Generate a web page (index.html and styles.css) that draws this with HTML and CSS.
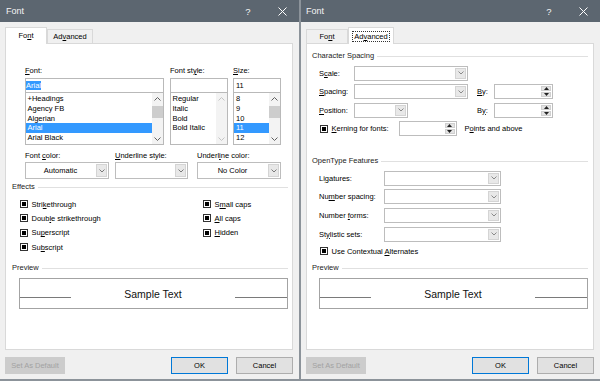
FILE: index.html
```html
<!DOCTYPE html>
<html>
<head>
<meta charset="utf-8">
<title>Font</title>
<link rel="stylesheet" href="styles.css">
</head>
<body>
<div class="screen">
  <section class="dialog dialog-left">
    <div class="titlebar">
      <span class="title">Font</span>
      <span class="help">?</span>
      <span class="close"><svg width="9" height="9" viewBox="0 0 9 9"><path d="M0.5 0.5L8.5 8.5M8.5 0.5L0.5 8.5" stroke="#fff" stroke-width="1"/></svg></span>
    </div>
    <div class="tabs">
      <div class="tab tab-font selected">Fo<u>n</u>t</div>
      <div class="tab tab-adv">Ad<u>v</u>anced</div>
    </div>
    <div class="panel panel-font">
      <div class="pickers">
        <div class="pick pick-font">
          <div class="lbl"><u>F</u>ont:</div>
          <div class="input"><span class="hl">Arial</span></div>
          <div class="list">
            <div class="items">
              <div class="it">+Headings</div>
              <div class="it">Agency FB</div>
              <div class="it">Algerian</div>
              <div class="it sel">Arial</div>
              <div class="it">Arial Black</div>
            </div>
            <div class="sbar">
              <span class="sarr"><svg width="7" height="4" viewBox="0 0 7 4"><polyline points="0.5,3.5 3.5,0.5 6.5,3.5" fill="none" stroke="#606060"/></svg></span>
              <span class="thumb"></span>
              <span class="sarr dn"><svg width="7" height="4" viewBox="0 0 7 4"><polyline points="0.5,0.5 3.5,3.5 6.5,0.5" fill="none" stroke="#606060"/></svg></span>
            </div>
          </div>
        </div>
        <div class="pick pick-style">
          <div class="lbl">Font st<u>y</u>le:</div>
          <div class="input"></div>
          <div class="list">
            <div class="items">
              <div class="it">Regular</div>
              <div class="it">Italic</div>
              <div class="it">Bold</div>
              <div class="it">Bold Italic</div>
            </div>
            <div class="sbar sbar-off">
              <span class="sarr"><svg width="7" height="4" viewBox="0 0 7 4"><polyline points="0.5,3.5 3.5,0.5 6.5,3.5" fill="none" stroke="#c4c4c4"/></svg></span>
              <span class="sarr dn"><svg width="7" height="4" viewBox="0 0 7 4"><polyline points="0.5,0.5 3.5,3.5 6.5,0.5" fill="none" stroke="#c4c4c4"/></svg></span>
            </div>
          </div>
        </div>
        <div class="pick pick-size">
          <div class="lbl"><u>S</u>ize:</div>
          <div class="input input-size">11</div>
          <div class="list">
            <div class="items items-size">
              <div class="it">8</div>
              <div class="it">9</div>
              <div class="it">10</div>
              <div class="it sel">11</div>
              <div class="it">12</div>
            </div>
            <div class="sbar">
              <span class="sarr"><svg width="7" height="4" viewBox="0 0 7 4"><polyline points="0.5,3.5 3.5,0.5 6.5,3.5" fill="none" stroke="#606060"/></svg></span>
              <span class="thumb"></span>
              <span class="sarr dn"><svg width="7" height="4" viewBox="0 0 7 4"><polyline points="0.5,0.5 3.5,3.5 6.5,0.5" fill="none" stroke="#606060"/></svg></span>
            </div>
          </div>
        </div>
      </div>

      <div class="colors">
        <div class="cfield f-fc">
          <div class="clbl">Font <u>c</u>olor:</div>
          <div class="combo"><span class="val">Automatic</span><span class="arr"><svg width="6" height="4" viewBox="0 0 6 4"><polyline points="0.5,0.5 3,3 5.5,0.5" fill="none" stroke="#7a7a7a"/></svg></span></div>
        </div>
        <div class="cfield f-us">
          <div class="clbl"><u>U</u>nderline style:</div>
          <div class="combo"><span class="val"></span><span class="arr"><svg width="6" height="4" viewBox="0 0 6 4"><polyline points="0.5,0.5 3,3 5.5,0.5" fill="none" stroke="#7a7a7a"/></svg></span></div>
        </div>
        <div class="cfield f-uc">
          <div class="clbl">Underl<u>i</u>ne color:</div>
          <div class="combo"><span class="val">No Color</span><span class="arr"><svg width="6" height="4" viewBox="0 0 6 4"><polyline points="0.5,0.5 3,3 5.5,0.5" fill="none" stroke="#7a7a7a"/></svg></span></div>
        </div>
      </div>

      <div class="group g-effects">
        <div class="legend"><span>Effects</span></div>
        <div class="effects">
          <div class="eff-col col1">
            <div class="cb"><span class="box"></span><span>Stri<u>k</u>ethrough</span></div>
            <div class="cb"><span class="box"></span><span>Doub<u>l</u>e strikethrough</span></div>
            <div class="cb"><span class="box"></span><span>Su<u>p</u>erscript</span></div>
            <div class="cb"><span class="box"></span><span>Su<u>b</u>script</span></div>
          </div>
          <div class="eff-col col2">
            <div class="cb"><span class="box"></span><span>S<u>m</u>all caps</span></div>
            <div class="cb"><span class="box"></span><span><u>A</u>ll caps</span></div>
            <div class="cb"><span class="box"></span><span><u>H</u>idden</span></div>
          </div>
        </div>
      </div>

      <div class="group g-preview">
        <div class="legend"><span>Preview</span></div>
        <div class="pbox">
          <span class="pline pl-left"></span>
          <span class="ptext">Sample Text</span>
          <span class="pline pl-right"></span>
        </div>
      </div>
    </div>
    <div class="buttons">
      <div class="btn btn-default">Set As Default</div>
      <div class="btn btn-ok">OK</div>
      <div class="btn btn-cancel">Cancel</div>
    </div>
  </section>

  <section class="dialog dialog-right">
    <div class="titlebar">
      <span class="title">Font</span>
      <span class="help">?</span>
      <span class="close"><svg width="9" height="9" viewBox="0 0 9 9"><path d="M0.5 0.5L8.5 8.5M8.5 0.5L0.5 8.5" stroke="#fff" stroke-width="1"/></svg></span>
    </div>
    <div class="tabs">
      <div class="tab tab-font">Fo<u>n</u>t</div>
      <div class="tab tab-adv selected"><span class="focus">Ad<u>v</u>anced</span></div>
    </div>
    <div class="panel panel-adv">
      <div class="group g-cs">
        <div class="legend"><span>Character Spacing</span></div>
        <div class="rows">
          <div class="row">
            <span class="rlbl">S<u>c</u>ale:</span>
            <span class="cell"><span class="combo c-full"><span class="val"></span><span class="arr"><svg width="6" height="4" viewBox="0 0 6 4"><polyline points="0.5,0.5 3,3 5.5,0.5" fill="none" stroke="#8a8a8a"/></svg></span></span></span>
          </div>
          <div class="row">
            <span class="rlbl"><u>S</u>pacing:</span>
            <span class="cell"><span class="combo c-full"><span class="val"></span><span class="arr"><svg width="6" height="4" viewBox="0 0 6 4"><polyline points="0.5,0.5 3,3 5.5,0.5" fill="none" stroke="#8a8a8a"/></svg></span></span></span>
            <span class="by"><u>B</u>y:</span>
            <span class="spin s-by"><span class="spin-btns"><span class="sb"><svg width="5" height="3" viewBox="0 0 5 3"><polygon points="0,3 2.5,0 5,3" fill="#222"/></svg></span><span class="sb"><svg width="5" height="3" viewBox="0 0 5 3"><polygon points="0,0 2.5,3 5,0" fill="#222"/></svg></span></span></span>
          </div>
          <div class="row">
            <span class="rlbl"><u>P</u>osition:</span>
            <span class="cell"><span class="combo c-pos"><span class="val"></span><span class="arr"><svg width="6" height="4" viewBox="0 0 6 4"><polyline points="0.5,0.5 3,3 5.5,0.5" fill="none" stroke="#8a8a8a"/></svg></span></span></span>
            <span class="by">B<u>y</u>:</span>
            <span class="spin s-by"><span class="spin-btns"><span class="sb"><svg width="5" height="3" viewBox="0 0 5 3"><polygon points="0,3 2.5,0 5,3" fill="#222"/></svg></span><span class="sb"><svg width="5" height="3" viewBox="0 0 5 3"><polygon points="0,0 2.5,3 5,0" fill="#222"/></svg></span></span></span>
          </div>
          <div class="row">
            <span class="cb cb-inline"><span class="box"></span><span class="klbl"><u>K</u>erning for fonts:</span></span>
            <span class="spin s-kern"><span class="spin-btns"><span class="sb"><svg width="5" height="3" viewBox="0 0 5 3"><polygon points="0,3 2.5,0 5,3" fill="#222"/></svg></span><span class="sb"><svg width="5" height="3" viewBox="0 0 5 3"><polygon points="0,0 2.5,3 5,0" fill="#222"/></svg></span></span></span>
            <span class="pts">P<u>o</u>ints and above</span>
          </div>
        </div>
      </div>

      <div class="group g-ot">
        <div class="legend"><span>OpenType Features</span></div>
        <div class="rows">
          <div class="row">
            <span class="rlbl rlbl-ot">Li<u>g</u>atures:</span>
            <span class="combo c-ot"><span class="val"></span><span class="arr"><svg width="6" height="4" viewBox="0 0 6 4"><polyline points="0.5,0.5 3,3 5.5,0.5" fill="none" stroke="#8a8a8a"/></svg></span></span>
          </div>
          <div class="row">
            <span class="rlbl rlbl-ot">Nu<u>m</u>ber spacing:</span>
            <span class="combo c-ot"><span class="val"></span><span class="arr"><svg width="6" height="4" viewBox="0 0 6 4"><polyline points="0.5,0.5 3,3 5.5,0.5" fill="none" stroke="#8a8a8a"/></svg></span></span>
          </div>
          <div class="row">
            <span class="rlbl rlbl-ot">Number <u>f</u>orms:</span>
            <span class="combo c-ot"><span class="val"></span><span class="arr"><svg width="6" height="4" viewBox="0 0 6 4"><polyline points="0.5,0.5 3,3 5.5,0.5" fill="none" stroke="#8a8a8a"/></svg></span></span>
          </div>
          <div class="row">
            <span class="rlbl rlbl-ot">St<u>y</u>listic sets:</span>
            <span class="combo c-ot"><span class="val"></span><span class="arr"><svg width="6" height="4" viewBox="0 0 6 4"><polyline points="0.5,0.5 3,3 5.5,0.5" fill="none" stroke="#8a8a8a"/></svg></span></span>
          </div>
          <div class="cb cb-ctx"><span class="box"></span><span>Use Contextual <u>A</u>lternates</span></div>
        </div>
      </div>

      <div class="group g-preview g-preview-adv">
        <div class="legend"><span>Preview</span></div>
        <div class="pbox">
          <span class="pline pl-left"></span>
          <span class="ptext">Sample Text</span>
          <span class="pline pl-right"></span>
        </div>
      </div>
    </div>
    <div class="buttons">
      <div class="btn btn-default">Set As Default</div>
      <div class="btn btn-ok">OK</div>
      <div class="btn btn-cancel">Cancel</div>
    </div>
  </section>
</div>
</body>
</html>
```

FILE: styles.css
```css
html, body {
  margin: 0;
  padding: 0;
}
body {
  font-family: "Liberation Sans", Arial, sans-serif;
  font-size: 7.5px;
  color: #000;
  background: #f0f0f0;
}
u {
  text-decoration: underline;
  text-underline-offset: 1px;
}
.screen {
  display: flex;
  width: 600px;
  height: 381px;
  overflow: hidden;
  background: #f0f0f0;
}
.dialog {
  width: 300px;
  height: 381px;
  box-sizing: border-box;
  background: #f0f0f0;
  border-bottom: 2px solid #8c939a;
  display: flex;
  flex-direction: column;
  flex: none;
}
.dialog-left {
  border-right: 1px solid #8c939a;
}
.dialog-right {
  border-left: 1px solid #8c939a;
}

/* title bar */
.titlebar {
  height: 22px;
  flex: none;
  background: #5c6670;
  color: #f4f4f4;
  display: flex;
  align-items: center;
}
.title {
  padding-left: 6px;
  font-size: 9px;
}
.dialog-right .title {
  padding-left: 5px;
}
.help {
  margin-left: auto;
  width: 30px;
  text-align: center;
  font-size: 9.5px;
}
.close {
  width: 30px;
  margin-left: 4px;
  margin-right: 2px;
  display: flex;
  justify-content: center;
}

/* tabs */
.tabs {
  height: 21px;
  flex: none;
  display: flex;
  align-items: flex-end;
  padding-left: 5px;
}
.tab {
  box-sizing: border-box;
  height: 14px;
  border: 1px solid #d9d9d9;
  border-bottom: none;
  background: #f0f0f0;
  text-align: center;
  line-height: 13px;
  color: #000;
}
.tab-font {
  width: 42px;
}
.tab-adv {
  width: 46px;
}
.tab.selected {
  height: 17px;
  background: #fff;
  margin-bottom: -1px;
  position: relative;
  z-index: 1;
  line-height: 16px;
}
.tab-adv.selected {
  display: flex;
  align-items: center;
  justify-content: center;
}
.focus {
  display: block;
  line-height: 9px;
  padding: 0 1px;
  border: 1px dotted #333;
}

/* panel */
.panel {
  width: 288px;
  height: 307px;
  flex: none;
  box-sizing: border-box;
  margin-left: 5px;
  border: 1px solid #d9d9d9;
  background: #fff;
}

/* font pickers */
.pickers {
  display: flex;
  padding: 22px 0 0 19px;
}
.pick-font {
  width: 139px;
}
.pick-style {
  width: 58px;
  margin-left: 6px;
}
.pick-size {
  width: 48px;
  margin-left: 5px;
}
.lbl {
  height: 10px;
  line-height: 10px;
  margin-bottom: 2px;
  white-space: nowrap;
}
.input {
  height: 15px;
  box-sizing: border-box;
  border: 1px solid #b9b9b9;
  line-height: 13px;
  padding-left: 0;
  background: #fff;
}
.input-size {
  padding-left: 2px;
}
.hl {
  background: #3399ff;
  color: #fff;
}
.list {
  height: 52px;
  box-sizing: border-box;
  border: 1px solid #b9b9b9;
  border-top: none;
  display: flex;
  background: #fff;
}
.items {
  flex: 1;
  padding-top: 1px;
  overflow: hidden;
}
.it {
  height: 9.8px;
  line-height: 9.8px;
  padding-left: 1.5px;
  white-space: nowrap;
}
.items-size .it {
  padding-left: 2px;
}
.it.sel {
  background: #3399ff;
  color: #fff;
}
.sbar {
  width: 11px;
  flex: none;
  background: #f3f3f3;
  display: flex;
  flex-direction: column;
  align-items: center;
}
.sarr {
  height: 11px;
  width: 11px;
  display: flex;
  align-items: center;
  justify-content: center;
}
.sarr.dn {
  margin-top: auto;
}
.thumb {
  width: 11px;
  height: 12px;
  margin-top: 2px;
  background: #cdcdcd;
}

/* colour combos */
.colors {
  display: flex;
  padding-left: 19px;
  margin-top: 6px;
}
.f-fc {
  width: 84px;
}
.f-us {
  width: 73px;
  margin-left: 6px;
}
.f-uc {
  width: 84px;
  margin-left: 9px;
}
.clbl {
  height: 10px;
  line-height: 10px;
  margin-bottom: 1px;
  white-space: nowrap;
}
.combo {
  display: flex;
  height: 17px;
  box-sizing: border-box;
  border: 1px solid #bdbdbd;
  background: #fff;
}
.combo .val {
  flex: 1;
  text-align: center;
  line-height: 15px;
}
.combo .arr {
  width: 11px;
  flex: none;
  margin: 1px;
  box-sizing: border-box;
  background: #e8e8e8;
  border: 1px solid #d4d4d4;
  display: flex;
  align-items: center;
  justify-content: center;
}

/* groups */
.group {
  margin: 0 4px 0 6px;
}
.legend {
  display: flex;
  align-items: center;
  height: 10px;
  line-height: 10px;
  color: #222;
  white-space: nowrap;
}
.legend::after {
  content: "";
  flex: 1;
  margin-left: 3px;
  border-top: 1px solid #e0e0e0;
}
.g-effects {
  margin-top: 3px;
}
.effects {
  display: flex;
  padding-left: 8px;
  margin-top: 5px;
}
.eff-col {
  display: flex;
  flex-direction: column;
}
.col1 {
  width: 183px;
}
.cb {
  display: flex;
  align-items: center;
  height: 14.33px;
  white-space: nowrap;
}
.box {
  width: 8px;
  height: 8px;
  flex: none;
  box-sizing: border-box;
  border: 1px solid #333;
  background: #000;
  box-shadow: inset 0 0 0 1px #fff;
  margin-right: 3.5px;
}

/* preview */
.g-preview {
  margin-top: 9px;
}
.pbox {
  display: flex;
  height: 31px;
  box-sizing: border-box;
  margin-top: 5px;
  margin-left: 7px;
  border: 1px solid #a3a3a3;
  background: #fff;
}
.pline {
  height: 0;
  margin-top: 18px;
  border-top: 1px solid #7a7a7a;
  flex: none;
}
.pl-left {
  width: 51px;
}
.pl-right {
  width: 52px;
}
.ptext {
  flex: 1;
  text-align: center;
  font-size: 10.5px;
  line-height: 12px;
  margin-top: 8.3px;
  color: #111;
}

/* advanced panel */
.panel-adv {
  padding-top: 7px;
}
.panel-adv .group {
  margin-left: 5px;
  margin-right: 5px;
}
.rows {
  padding-left: 7px;
}
.row {
  display: flex;
  align-items: center;
  height: 15px;
  margin-top: 3.6px;
  white-space: nowrap;
}
.row:first-child {
  margin-top: 4.5px;
}
.rlbl {
  width: 35px;
  flex: none;
}
.rlbl-ot {
  width: 65px;
}
.cell {
  width: 114px;
  flex: none;
  display: flex;
}
.row .combo {
  height: 15px;
}
.row .combo .val {
  line-height: 13px;
}
.c-full {
  width: 114px;
}
.c-pos {
  width: 54px;
}
.c-ot {
  width: 117px;
}
.by {
  width: 17px;
  margin-left: 9px;
  flex: none;
}
.spin {
  display: flex;
  height: 15px;
  box-sizing: border-box;
  border: 1px solid #bdbdbd;
  background: #fff;
  flex: none;
}
.s-by {
  width: 59px;
}
.s-kern {
  width: 58px;
}
.spin-btns {
  margin-left: auto;
  width: 10px;
  display: flex;
  flex-direction: column;
  gap: 1px;
  padding: 1px 1px 1px 0;
}
.sb {
  flex: 1;
  box-sizing: border-box;
  background: #e3e3e3;
  border: 1px solid #cfcfcf;
  display: flex;
  align-items: center;
  justify-content: center;
}
.cb-inline {
  height: 15px;
  margin-left: 1px;
}
.klbl {
  width: 67px;
}
.pts {
  margin-left: 8px;
}
.g-ot {
  margin-top: 20px;
}
.cb-ctx {
  height: 10px;
  margin-top: 4.7px;
  margin-left: 1px;
}
.g-preview-adv {
  margin-top: 7px;
}

/* buttons */
.buttons {
  display: flex;
  margin-top: 7px;
  padding: 0 6px 0 5px;
  flex: none;
}
.btn {
  height: 17px;
  box-sizing: border-box;
  text-align: center;
  line-height: 15px;
  border: 1px solid #adadad;
  background: #e1e1e1;
}
.btn-default {
  width: 60px;
  background: #cccccc;
  border-color: #cccccc;
  color: #a2a2a2;
}
.btn-ok {
  width: 57px;
  margin-left: auto;
  border-color: #0078d7;
}
.btn-cancel {
  width: 57px;
  margin-left: 8px;
}
```
